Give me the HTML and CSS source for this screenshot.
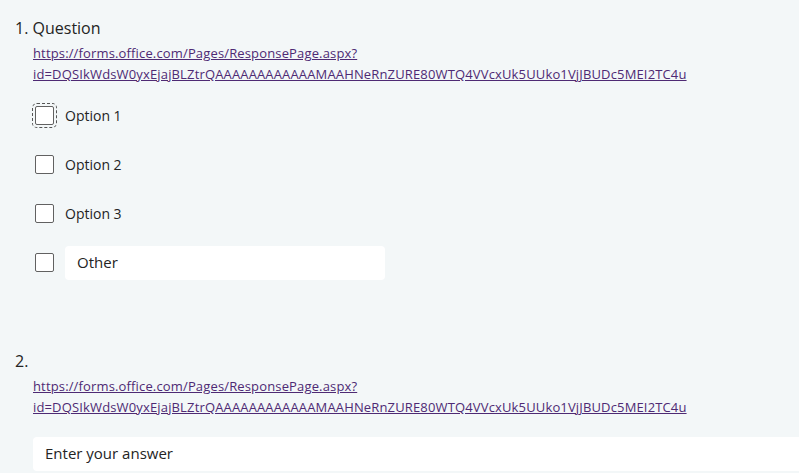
FILE: index.html
```html
<!DOCTYPE html>
<html>
<head>
<meta charset="utf-8">
<link rel="stylesheet" href="styles.css">
</head>
<body>
<div class="page">
  <section class="question">
    <div class="q-title">1. Question</div>
    <div class="q-desc">
      <a class="link" href="#">https://forms.office.com/Pages/ResponsePage.aspx?<br>id=DQSIkWdsW0yxEjajBLZtrQAAAAAAAAAAAAMAAHNeRnZURE80WTQ4VVcxUk5UUko1VjJBUDc5MEI2TC4u</a>
    </div>
    <div class="options">
      <label class="option">
        <span class="checkbox focused"></span>
        <span class="opt-text">Option 1</span>
      </label>
      <label class="option">
        <span class="checkbox"></span>
        <span class="opt-text">Option 2</span>
      </label>
      <label class="option">
        <span class="checkbox"></span>
        <span class="opt-text">Option 3</span>
      </label>
      <label class="option">
        <span class="checkbox"></span>
        <span class="other-box">Other</span>
      </label>
    </div>
  </section>
  <section class="question q2">
    <div class="q-title">2.</div>
    <div class="q-desc">
      <a class="link" href="#">https://forms.office.com/Pages/ResponsePage.aspx?<br>id=DQSIkWdsW0yxEjajBLZtrQAAAAAAAAAAAAMAAHNeRnZURE80WTQ4VVcxUk5UUko1VjJBUDc5MEI2TC4u</a>
    </div>
    <div class="answer">Enter your answer</div>
  </section>
</div>
</body>
</html>
```
FILE: styles.css
```css
html, body {
  margin: 0;
  padding: 0;
  background: #f3f7f8;
  overflow: hidden;
}
body {
  font-family: "Open Sans", "Noto Sans", sans-serif;
  color: #242424;
}
.page {
  padding: 16px 0 0 15px;
}
.q-title {
  font-size: 16px;
  line-height: 24px;
}
.q-desc {
  margin: 3px 0 0 18px;
  font-size: 13px;
  line-height: 21px;
  letter-spacing: 0.15px;
  white-space: nowrap;
}
.link {
  color: #4e2a74;
  text-decoration: underline;
}
.options {
  margin: 14px 0 0 20px;
  display: flex;
  flex-direction: column;
  gap: 15px;
}
.option {
  display: flex;
  align-items: center;
  height: 34px;
  gap: 11px;
}
.checkbox {
  width: 19px;
  height: 19px;
  box-sizing: border-box;
  border: 1px solid #616161;
  border-radius: 2px;
  background: #fff;
  flex: none;
  margin-top: -1px;
}
.checkbox.focused {
  outline: 1px dashed #555;
  outline-offset: 2px;
}
.opt-text {
  font-size: 14px;
  margin-top: -2px;
}
.other-box {
  width: 320px;
  height: 34px;
  box-sizing: border-box;
  background: #fff;
  border-radius: 4px;
  font-size: 15px;
  line-height: 33px;
  padding-left: 12px;
}
.q2 {
  margin-top: 69px;
}
.answer {
  margin: 19px 0 0 18px;
  width: 800px;
  height: 34px;
  box-sizing: border-box;
  background: #fff;
  border-radius: 4px;
  font-size: 15px;
  line-height: 33px;
  padding-left: 12px;
}
```
